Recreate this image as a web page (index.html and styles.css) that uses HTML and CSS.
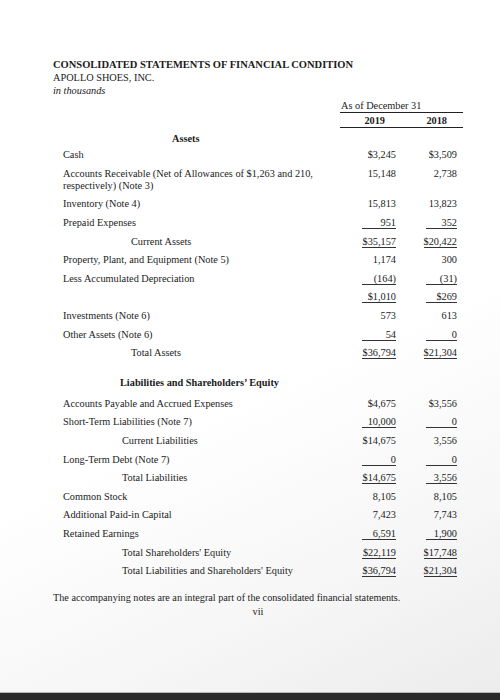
FILE: index.html
```html
<!DOCTYPE html>
<html lang="en">
<head>
  <meta charset="UTF-8" />
  <title>Consolidated Statements of Financial Condition</title>
  <link rel="stylesheet" href="styles.css">
</head>
<body>
  <div class="page">
    <div class="doc">
      <h1 class="title">CONSOLIDATED STATEMENTS OF FINANCIAL CONDITION</h1>
      <p class="company">APOLLO SHOES, INC.</p>
      <p class="unit">in thousands</p>

      <div class="period">
        <div class="period-label">As of December 31</div>
        <div class="years"><span>2019</span><span>2018</span></div>
      </div>

      <!-- Assets -->
      <h2 class="section section-assets">Assets</h2>
      <div class="row"><span class="label">Cash</span><span class="amt">$3,245</span><span class="amt">$3,509</span></div>
      <div class="row"><span class="label">Accounts Receivable (Net of Allowances of $1,263 and 210, respectively) (Note 3)</span><span class="amt">15,148</span><span class="amt">2,738</span></div>
      <div class="row"><span class="label">Inventory (Note 4)</span><span class="amt">15,813</span><span class="amt">13,823</span></div>
      <div class="row"><span class="label">Prepaid Expenses</span><span class="amt"><u class="ul">951</u></span><span class="amt"><u class="ul ul-b">352</u></span></div>
      <div class="row"><span class="label indent-a">Current Assets</span><span class="amt"><u class="ul">$35,157</u></span><span class="amt"><u class="ul ul-b">$20,422</u></span></div>
      <div class="row"><span class="label">Property, Plant, and Equipment (Note 5)</span><span class="amt">1,174</span><span class="amt">300</span></div>
      <div class="row"><span class="label">Less Accumulated Depreciation</span><span class="amt"><u class="ul">(164)</u></span><span class="amt"><u class="ul ul-b">(31)</u></span></div>
      <div class="row"><span class="label"></span><span class="amt"><u class="ul">$1,010</u></span><span class="amt"><u class="ul ul-b">$269</u></span></div>
      <div class="row"><span class="label">Investments (Note 6)</span><span class="amt">573</span><span class="amt">613</span></div>
      <div class="row"><span class="label">Other Assets (Note 6)</span><span class="amt"><u class="ul">54</u></span><span class="amt"><u class="ul ul-b">0</u></span></div>
      <div class="row"><span class="label indent-a">Total Assets</span><span class="amt"><u class="ul">$36,794</u></span><span class="amt"><u class="ul ul-b">$21,304</u></span></div>

      <!-- Liabilities -->
      <h2 class="section section-liab">Liabilities and Shareholders’ Equity</h2>
      <div class="row"><span class="label">Accounts Payable and Accrued Expenses</span><span class="amt">$4,675</span><span class="amt">$3,556</span></div>
      <div class="row"><span class="label">Short-Term Liabilities (Note 7)</span><span class="amt"><u class="ul">10,000</u></span><span class="amt"><u class="ul ul-b">0</u></span></div>
      <div class="row"><span class="label indent-b">Current Liabilities</span><span class="amt">$14,675</span><span class="amt">3,556</span></div>
      <div class="row"><span class="label">Long-Term Debt (Note 7)</span><span class="amt"><u class="ul">0</u></span><span class="amt"><u class="ul ul-b">0</u></span></div>
      <div class="row"><span class="label indent-b">Total Liabilities</span><span class="amt"><u class="ul">$14,675</u></span><span class="amt"><u class="ul ul-b">3,556</u></span></div>
      <div class="row"><span class="label">Common Stock</span><span class="amt">8,105</span><span class="amt">8,105</span></div>
      <div class="row"><span class="label">Additional Paid-in Capital</span><span class="amt">7,423</span><span class="amt">7,743</span></div>
      <div class="row"><span class="label">Retained Earnings</span><span class="amt"><u class="ul">6,591</u></span><span class="amt"><u class="ul ul-b">1,900</u></span></div>
      <div class="row"><span class="label indent-b">Total Shareholders' Equity</span><span class="amt"><u class="ul">$22,119</u></span><span class="amt"><u class="ul ul-b">$17,748</u></span></div>
      <div class="row"><span class="label indent-b">Total Liabilities and Shareholders' Equity</span><span class="amt"><u class="ul">$36,794</u></span><span class="amt"><u class="ul ul-b">$21,304</u></span></div>

      <p class="note">The accompanying notes are an integral part of the consolidated financial statements.</p>
      <p class="folio">vii</p>
    </div>
  </div>
  <div class="footbar"></div>
</body>
</html>
```

FILE: styles.css
```css
body {
  margin: 0;
  width: 500px;
  height: 700px;
  overflow: hidden;
  font-family: "Liberation Serif", "Times New Roman", serif;
  color: #1b1b1b;
  background: #fff;
}

.page {
  height: 692px;
  background: linear-gradient(155deg, #ffffff 55%, #f6f6f6 80%, #ececec 100%);
}

.doc {
  padding: 58px 0 0 53px;
  width: 410px;
  font-size: 10.3px;
  line-height: 12px;
}

.title {
  margin: 0;
  font-size: 10.5px;
  line-height: 13px;
  font-weight: bold;
}

.company,
.unit {
  margin: 0;
  font-size: 10.3px;
  line-height: 13px;
}

.unit {
  font-style: italic;
}

.period {
  margin: 3px 0 0 287px;
  width: 123px;
}

.period-label {
  border-bottom: 1px solid #222;
  padding-left: 1px;
}

.years {
  display: grid;
  grid-template-columns: 56px 61px;
  padding: 2px 0 0;
  border-bottom: 1px solid #222;
  font-weight: bold;
}

.years span {
  text-align: right;
  padding-right: 11px;
}

.years span:last-child {
  padding-right: 10px;
}

.section {
  margin: 5px 0 1px;
  font-size: 10.3px;
  line-height: 12px;
  font-weight: bold;
}

.section-assets {
  margin-left: 119px;
}

.section-liab {
  margin: 14px 0 6px 67px;
}

.row {
  display: grid;
  grid-template-columns: 277px 56px 61px;
  padding: 3.3px 0 3.3px 10px;
}

.label {
  padding-right: 8px;
}

.indent-a {
  padding-left: 68px;
}

.indent-b {
  padding-left: 59px;
}

.amt {
  text-align: right;
}

.ul {
  display: inline-block;
  min-width: 34px;
  line-height: 10px;
  text-decoration: none;
  border-bottom: 1px solid #333;
}

.ul-b {
  min-width: 31px;
}

.note {
  margin: 12px 0 0;
  font-size: 10.2px;
}

.folio {
  margin: 2px 0 0;
  text-align: center;
}

.footbar {
  height: 7px;
  border-top: 1px solid #b8b8b8;
  background: #2a2a2a;
}
```
